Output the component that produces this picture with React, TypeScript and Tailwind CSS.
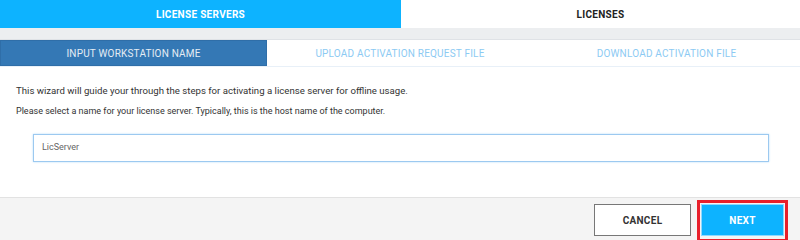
export default function App() {
  return (
    <div className="w-[800px] h-[240px] bg-white overflow-hidden flex flex-col" style={{ fontFamily: "Roboto, 'Liberation Sans', sans-serif" }}>
      <div className="flex h-[28px]">
        <div className="w-[401px] bg-[#0db3ff] flex items-center justify-center text-white text-[10px] font-bold tracking-[0.3px]">LICENSE SERVERS</div>
        <div className="flex-1 bg-white flex items-center justify-center text-[#222] text-[10px] font-bold tracking-[0.3px]">LICENSES</div>
      </div>
      <div className="h-[12px] bg-[#eceef0] border-b border-[#dfe2e6]"></div>
      <div className="flex h-[27px] border-b border-[#e8f0f8]">
        <div className="w-[267px] bg-[#3478b5] border border-[#2f6ea8] flex items-center justify-center text-[#e4ecf4] text-[10px] tracking-[0.2px]">INPUT WORKSTATION NAME</div>
        <div className="w-[266px] flex items-center justify-center text-[#8ccaf3] text-[10px] tracking-[0.2px]">UPLOAD ACTIVATION REQUEST FILE</div>
        <div className="flex-1 flex items-center justify-center text-[#8ccaf3] text-[10px] tracking-[0.2px]">DOWNLOAD ACTIVATION FILE</div>
      </div>
      <div className="flex-1 flex flex-col px-[16px]">
        <p className="mt-[17px] text-[9.65px] text-[#333] leading-[14px]">This wizard will guide your through the steps for activating a license server for offline usage.</p>
        <p className="mt-[6px] text-[9px] text-[#333] leading-[14px]">Please select a name for your license server. Typically, this is the host name of the computer.</p>
        <div className="mt-[16px] ml-[17px] w-[736px] h-[28px] border border-[#9cc9f0] shadow-[0_0_2px_#b8dcf8] flex items-center px-[8px] text-[9px] text-[#666]">LicServer</div>
      </div>
      <div className="h-[43px] bg-[#f4f4f4] border-t border-[#e2e2e2] flex justify-end items-start pt-[6px] pr-[12px] gap-[6px]">
        <div className="w-[97px] h-[32px] bg-white border border-[#777] flex items-center justify-center text-[10px] font-bold text-[#333] tracking-[0.3px]">CANCEL</div>
        <div className="w-[91px] h-[42px] -mt-[4px] border-[3px] border-[#e8202c] p-[1px]">
          <div className="w-full h-[32px] bg-[#0db3ff] border border-[#8fd8ff] flex items-center justify-center text-[10px] font-bold text-white tracking-[0.3px]">NEXT</div>
        </div>
      </div>
    </div>
  );
}
